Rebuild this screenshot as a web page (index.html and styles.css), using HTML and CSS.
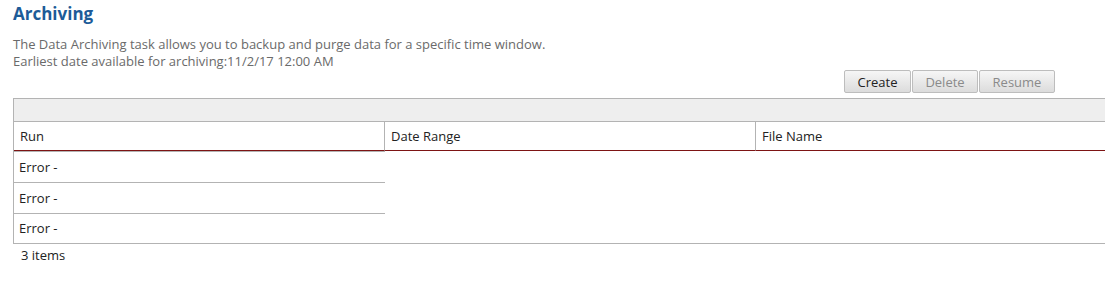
FILE: index.html
```html
<!DOCTYPE html>
<html>
<head>
<meta charset="utf-8">
<link rel="stylesheet" href="styles.css">
</head>
<body>
<div class="page">
  <h1 class="title">Archiving</h1>
  <p class="desc">The Data Archiving task allows you to backup and purge data for a specific time window.<br>Earliest date available for archiving:11/2/17 12:00 AM</p>
  <div class="toolbar">
    <button class="btn">Create</button>
    <button class="btn disabled">Delete</button>
    <button class="btn disabled">Resume</button>
  </div>
  <div class="grid">
    <div class="grid-top"></div>
    <div class="grid-head">
      <div class="th th-run">Run</div>
      <div class="th th-date">Date Range</div>
      <div class="th th-file">File Name</div>
    </div>
    <div class="grid-body">
      <div class="col-run">
        <div class="td">Error -</div>
        <div class="td">Error -</div>
        <div class="td">Error -</div>
      </div>
    </div>
  </div>
  <div class="footer">3 items</div>
</div>
</body>
</html>
```

FILE: styles.css
```css
html, body {
  margin: 0;
  padding: 0;
  background: #fff;
}
body {
  font-family: "Open Sans", "DejaVu Sans", sans-serif;
  font-size: 13px;
  color: #333;
  overflow: hidden;
}
.page {
  padding: 2px 0 0 13px;
}
.title {
  margin: 0;
  font-size: 17px;
  font-weight: 700;
  color: #1c5b98;
  line-height: 24px;
}
.desc {
  margin: 10px 0 0 0;
  color: #6a6a6a;
  font-size: 13px;
  line-height: 17px;
}
.toolbar {
  display: flex;
  justify-content: flex-end;
  gap: 1px;
  padding-right: 50px;
  margin-top: 0;
  height: 23px;
}
.btn {
  font-family: "Open Sans", "DejaVu Sans", sans-serif;
  font-size: 13px;
  color: #222;
  background: linear-gradient(#f6f6f6, #dcdcdc);
  border: 1px solid #bdbdbd;
  border-radius: 2px;
  height: 23px;
  padding: 0 12px;
  line-height: 20px;
  margin: 0;
}
.btn.disabled {
  color: #8a8a8a;
}
.btn:first-child { width: 67px; }
.btn:nth-child(2) { width: 66px; }
.btn:nth-child(3) { width: 76px; }
.grid {
  margin-top: 5px;
  border-left: 1px solid #b3b3b3;
  border-bottom: 1px solid #b3b3b3;
}
.grid-top {
  height: 22px;
  background: #eeeeee;
  border-top: 1px solid #b3b3b3;
  border-bottom: 1px solid #b3b3b3;
}
.grid-head {
  display: flex;
  height: 29px;
}
.th {
  padding: 0 6px;
  line-height: 28px;
  color: #222;
  border-bottom: 1px solid #7d1414;
  box-sizing: border-box;
  height: 29px;
}
.th-run {
  width: 371px;
  border-right: 1px solid #b3b3b3;
}
.th-date {
  width: 371px;
  border-right: 1px solid #b3b3b3;
}
.th-file {
  flex: 1;
}
.grid-body {
  display: flex;
}
.col-run {
  width: 371px;
  border-top: 1px solid #b3b3b3;
}
.td {
  height: 30px;
  line-height: 30px;
  padding-left: 5px;
  color: #222;
  border-bottom: 1px solid #b3b3b3;
}
.td:last-child {
  border-bottom: none;
  height: 29px;
  line-height: 29px;
}
.footer {
  padding-left: 8px;
  line-height: 22px;
  color: #222;
}
```
